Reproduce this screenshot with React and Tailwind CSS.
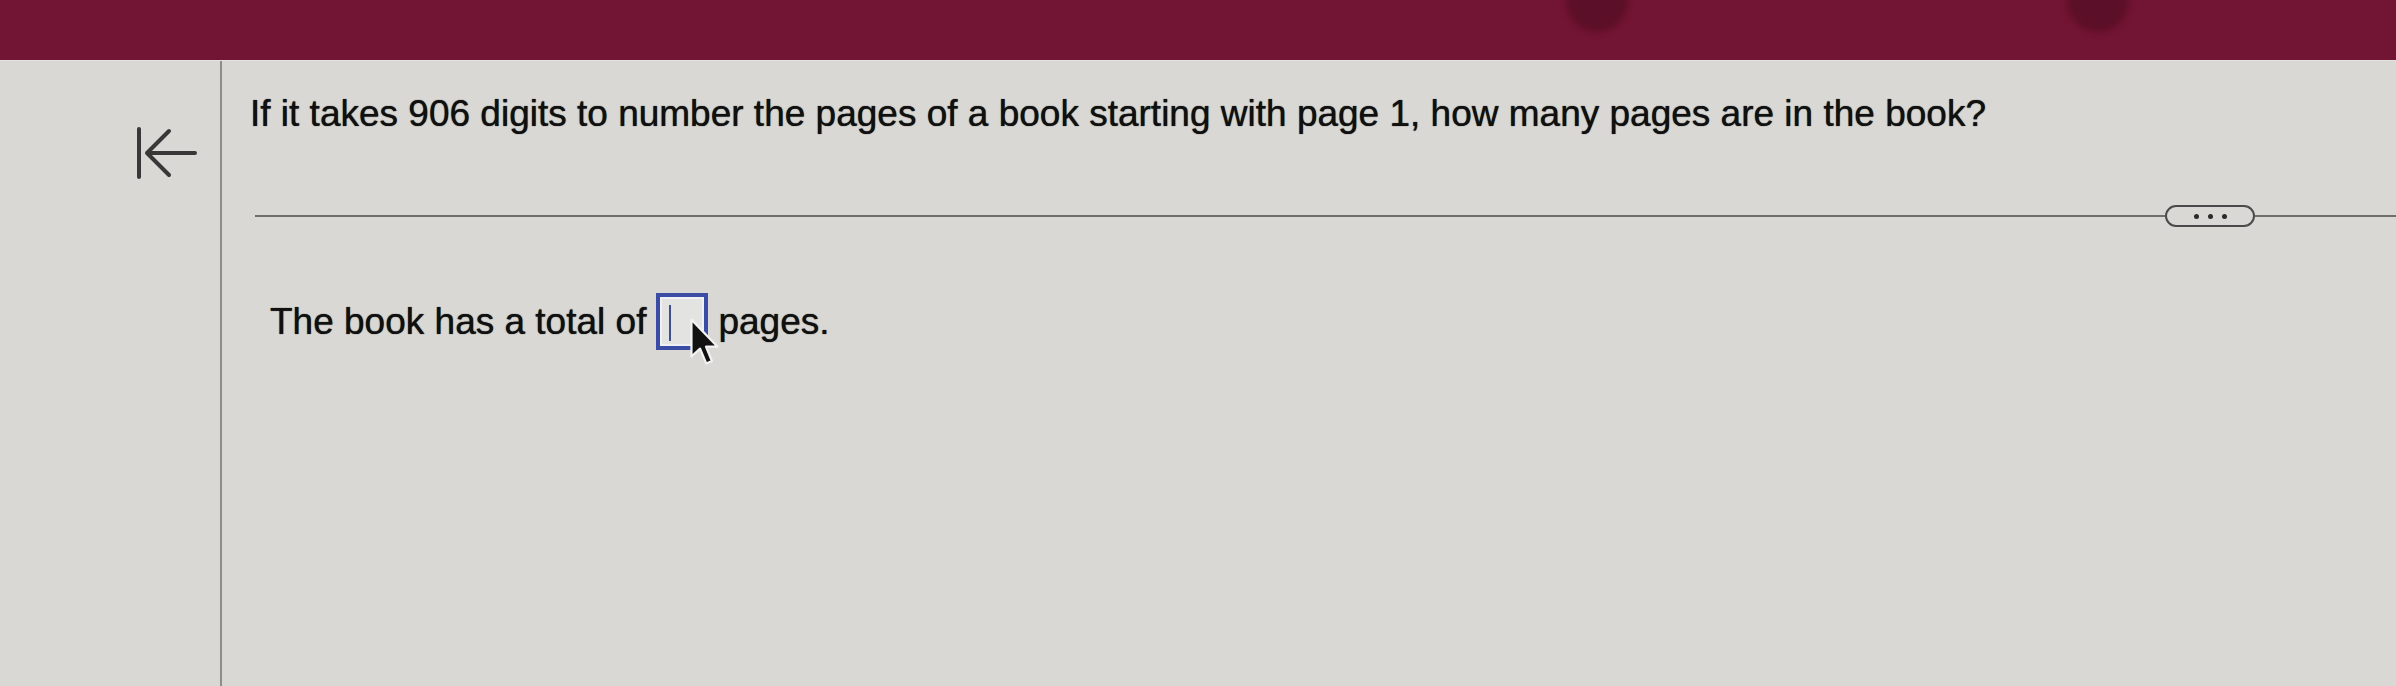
const FirstPageIcon = () => (
  <svg viewBox="0 0 62 52" className="w-[62px] h-[52px]" fill="none" stroke="#383838" strokeWidth="4" strokeLinecap="round" strokeLinejoin="round">
    <path d="M3 2 L3 50" />
    <path d="M12 26 L59 26" />
    <path d="M33 4 L11 26 L33 48" />
  </svg>
);

const Cursor = () => (
  <svg viewBox="0 0 13 21" className="w-[32px] h-[52px]">
    <path
      d="M1 1 L1 16 L4.5 12.8 L7 18.8 L9.3 17.8 L6.9 12 L11.6 12 Z"
      fill="#111"
      stroke="#f2f2f2"
      strokeWidth="0.9"
      strokeLinejoin="round"
    />
  </svg>
);

export default function App() {
  return (
    <div
      className="w-full h-[686px] bg-[#d9d8d4] text-[#101010] flex flex-col overflow-hidden [text-shadow:0_0_1px_#111]"
      style={{ fontFamily: '"Liberation Sans", Arial, sans-serif' }}
    >
      {/* top bar */}
      <div className="relative h-[61px] bg-[#721433] border-b border-[#e4e3df] shrink-0 overflow-hidden">
        <div className="absolute left-[1566px] top-[-30px] w-[62px] h-[62px] rounded-full bg-[#4f0c21] opacity-60 blur-[3px]" />
        <div className="absolute left-[2067px] top-[-30px] w-[62px] h-[62px] rounded-full bg-[#4f0c21] opacity-60 blur-[3px]" />
      </div>

      <div className="flex flex-1">
        {/* left rail */}
        <div className="w-[222px] shrink-0 border-r-2 border-[#8d8d8b] pl-[136px] pt-[66px]">
          <button type="button" aria-label="First" className="block">
            <FirstPageIcon />
          </button>
        </div>

        {/* content */}
        <div className="flex-1 pl-[28px] pt-[32px]">
          <p className="text-[37px] leading-[42px]">
            If it takes 906 digits to number the pages of a book starting with page 1, how many pages are in the book?
          </p>

          <div className="mt-[70px] ml-[5px] flex items-center">
            <div className="flex-1 h-[2px] bg-[#6e6e6c]" />
            <button
              type="button"
              className="w-[90px] h-[22px] rounded-full border-2 border-[#4a4a4a] flex items-center justify-center gap-[9px]"
            >
              <span className="w-[5px] h-[5px] rounded-full bg-[#2a2a2a]" />
              <span className="w-[5px] h-[5px] rounded-full bg-[#2a2a2a]" />
              <span className="w-[5px] h-[5px] rounded-full bg-[#2a2a2a]" />
            </button>
            <div className="w-[141px] h-[2px] bg-[#6e6e6c]" />
          </div>

          <div className="mt-[66px] pl-[20px] flex items-center gap-[10px] text-[37px] leading-[42px]">
            <span>The book has a total of</span>
            <div className="relative w-[52px] h-[57px] border-[4px] border-[#3a4ca3] bg-[#e3e3e1] shadow-[inset_0_0_0_2px_#eef0f6]">
              <div className="absolute left-[9px] top-[8px] w-[2px] h-[36px] bg-[#3f4e8f]" />
              <div className="absolute left-[29px] top-[20px]">
                <Cursor />
              </div>
            </div>
            <span>pages.</span>
          </div>
        </div>
      </div>
    </div>
  );
}
